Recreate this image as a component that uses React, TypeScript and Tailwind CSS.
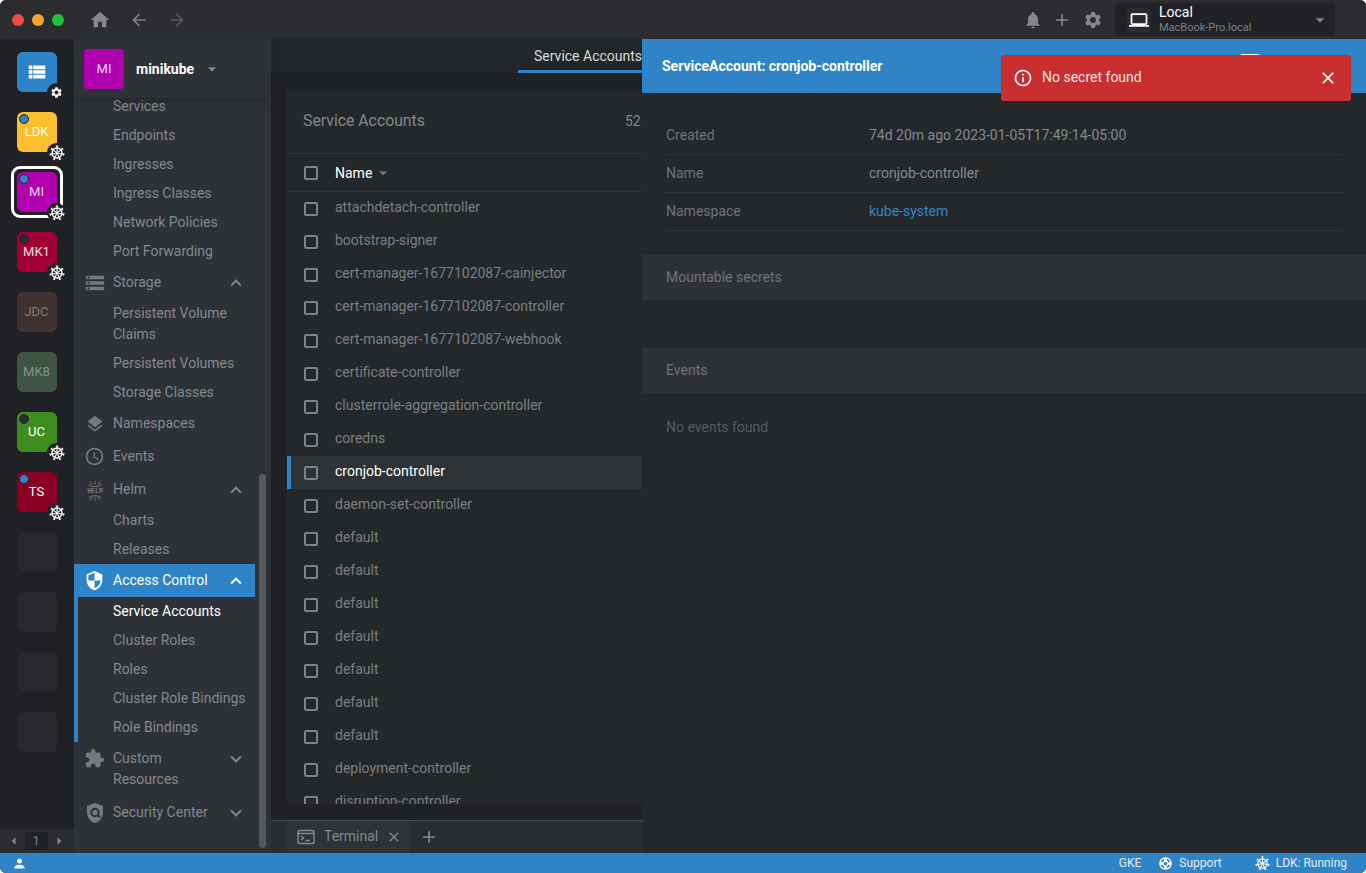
import {
  MdAdd,
  MdArrowBack,
  MdArrowDropDown,
  MdArrowForward,
  MdArrowLeft,
  MdArrowRight,
  MdClose,
  MdExpandLess,
  MdExpandMore,
  MdExtension,
  MdHome,
  MdInfoOutline,
  MdLaptop,
  MdLayers,
  MdNotifications,
  MdPerson,
  MdSchedule,
  MdSecurity,
  MdSettings,
  MdStorage,
  MdSupport,
  MdViewList,
} from "react-icons/md";
import type { ReactNode } from "react";

const HOTBAR = [
  { label: "LDK", bg: "bg-[#fcbf2d]", text: "text-white", dot: "bg-[#2e84c6]" },
  { label: "MI", bg: "bg-[#b000b0]", text: "text-[#f3d3f3]", dot: "bg-[#2e84c6]", active: true },
  { label: "MK1", bg: "bg-[#a00035]", text: "text-[#f6dbe3]", dot: "bg-[#2a2c30]" },
  { label: "JDC", bg: "bg-[#3f3230]", text: "text-[#827c79]", dim: true },
  { label: "MK8", bg: "bg-[#3e5546]", text: "text-[#83938a]", dim: true },
  { label: "UC", bg: "bg-[#3f8c1f]", text: "text-white", dot: "bg-[#2a2c30]" },
  { label: "TS", bg: "bg-[#8a0025]", text: "text-white", dot: "bg-[#2e84c6]" },
];

const ACCOUNTS = [
  "attachdetach-controller",
  "bootstrap-signer",
  "cert-manager-1677102087-cainjector",
  "cert-manager-1677102087-controller",
  "cert-manager-1677102087-webhook",
  "certificate-controller",
  "clusterrole-aggregation-controller",
  "coredns",
  "cronjob-controller",
  "daemon-set-controller",
  "default",
  "default",
  "default",
  "default",
  "default",
  "default",
  "default",
  "deployment-controller",
  "disruption-controller",
];

function KubeIcon({ size = 16 }: { size?: number }) {
  const spokes = [0, 1, 2, 3, 4, 5, 6].map((i) => (i * 360) / 7);
  return (
    <svg width={size} height={size} viewBox="0 0 24 24" fill="none" stroke="white" strokeWidth="2">
      <circle cx="12" cy="12" r="7.5" />
      <circle cx="12" cy="12" r="2.2" fill="white" stroke="none" />
      {spokes.map((a) => (
        <g key={a} transform={`rotate(${a} 12 12)`}>
          <path d="M12 10V1.2" strokeWidth="1.7" />
          <path d="M10.2 1.6h3.6" strokeWidth="1.6" />
        </g>
      ))}
    </svg>
  );
}

function HelmIcon() {
  return (
    <svg width="20" height="24" viewBox="0 0 20 24" fill="none" stroke="#77797d" strokeWidth="1">
      <path d="M3.5 6.5c3.5 3 9.500 3 13 0M10 3v3.500M5.500 3.500l1.500 3M14.500 3.500l-1.500 3" />
      <text x="10" y="15" textAnchor="middle" fill="#77797d" stroke="none" fontSize="6.500" fontWeight="700" fontFamily="'Liberation Mono', monospace">
        HELM
      </text>
      <path d="M3.500 20c3.500-3 9.500-3 13 0M10 23v-4M5.500 22.500l1.500-3M14.500 22.500l-1.500-3" />
    </svg>
  );
}

function ShieldSearchIcon() {
  return (
    <svg width="20" height="22" viewBox="0 0 20 22" fill="#77797d">
      <path d="M10 1 2 4v6.500C2 15.500 5.400 20 10 21c4.600-1 8-5.500 8-10.500V4z" />
      <circle cx="10" cy="10.500" r="3.700" fill="none" stroke="#2e3136" strokeWidth="2" />
      <path d="m12.500 13 2.500 2.500" stroke="#2e3136" strokeWidth="2" />
    </svg>
  );
}

function TerminalIcon() {
  return (
    <svg width="18" height="16" viewBox="0 0 18 16" fill="none" stroke="#85888c" strokeWidth="1.500">
      <rect x="1" y="1.500" width="16" height="13" rx="1.500" />
      <path d="M1 4.500h16" strokeWidth="1.500" />
      <path d="m4 7 2.500 2L4 11M8.500 11.500h4.500" />
    </svg>
  );
}

function HotbarTile({
  bg,
  label,
  text,
  dot,
  badge,
  active,
}: {
  bg: string;
  label?: ReactNode;
  text?: string;
  dot?: string;
  badge?: ReactNode;
  active?: boolean;
}) {
  return (
    <div className="relative h-10 w-10 shrink-0">
      {active && <div className="absolute -inset-[6px] rounded-[9px] border-[3px] border-white" />}
      <div className={`flex h-10 w-10 items-center justify-center rounded-[6px] pr-[1px] text-[13px] ${bg} ${text ?? ""}`}>
        {label}
      </div>
      {dot && (
        <div className={`absolute left-[2px] top-[2px] h-[10px] w-[10px] rounded-full border border-[#24262a] ${dot}`} />
      )}
      {badge && (
        <div className="absolute -bottom-[10px] -right-[9px] flex h-[19px] w-[19px] items-center justify-center rounded-full bg-[#1f2124]">
          {badge}
        </div>
      )}
    </div>
  );
}

function NavItem({
  icon,
  label,
  open,
  active,
  tall,
}: {
  icon: ReactNode;
  label: string;
  open?: boolean;
  active?: boolean;
  tall?: boolean;
}) {
  return (
    <div
      className={`flex items-center ${tall ? "h-[54px]" : "h-[33px]"} ${active ? "bg-[#2e84c6] text-white" : "text-[#85888c]"}`}
    >
      <div className={`flex w-[39px] shrink-0 justify-center pl-[2px] ${tall ? "-mt-[21px]" : ""}`}>{icon}</div>
      <div className="max-w-[105px] flex-1 text-sm leading-[21px]">{label}</div>
      {open !== undefined && (
        <div className={`ml-auto mr-[8px] ${tall ? "-mt-[21px]" : ""}`}>
          {open ? (
            <MdExpandLess className={active ? "text-white" : "text-[#85888c]"} size={22} />
          ) : (
            <MdExpandMore className="text-[#85888c]" size={22} />
          )}
        </div>
      )}
    </div>
  );
}

function SubItem({ label, active }: { label: string; active?: boolean }) {
  return (
    <div className={`py-1 pl-[39px] pr-1 text-sm leading-[21px] ${active ? "text-white" : "text-[#85888c]"}`}>
      {label}
    </div>
  );
}

function Checkbox() {
  return <div className="h-[14px] w-[14px] shrink-0 rounded-[2px] border-2 border-[#7f8285]" />;
}

function DetailRow({ label, value, link }: { label: string; value: string; link?: boolean }) {
  return (
    <div className="flex h-[38px] items-center border-b border-[#2f3337] pb-[2px] text-sm">
      <div className="w-[203px] text-[#707377]">{label}</div>
      <div className={link ? "text-[#2e84c6]" : "text-[#85888c]"}>{value}</div>
    </div>
  );
}

export default function App() {
  return (
    <div className="relative flex h-[873px] w-[1366px] flex-col overflow-hidden rounded-[6px] bg-[#1f2124] font-['Roboto',sans-serif]">
      {/* Title bar */}
      <div className="flex h-[39px] shrink-0 items-center bg-[#2a2c30] pl-3">
        <div className="flex gap-2">
          <div className="h-3 w-3 rounded-full bg-[#ee4a47]" />
          <div className="h-3 w-3 rounded-full bg-[#f5a62f]" />
          <div className="h-3 w-3 rounded-full bg-[#22c03c]" />
        </div>
        <MdHome className="ml-[25px] text-[#85878a]" size={22} />
        <MdArrowBack className="ml-[18px] text-[#7d7f83]" size={20} />
        <MdArrowForward className="ml-[18px] text-[#55585c]" size={20} />
        <MdNotifications className="ml-[836px] text-[#85878a]" size={20} />
        <MdAdd className="ml-[9px] text-[#85878a]" size={20} />
        <MdSettings className="ml-[11px] text-[#85878a]" size={20} />
        <div className="ml-3 flex h-[33px] w-[220px] shrink-0 items-center rounded-[4px] bg-[#1f2124] pl-3">
          <div className="flex h-6 w-6 items-center justify-center rounded-[4px] bg-[#2a2c30]">
            <MdLaptop className="text-white" size={20} />
          </div>
          <div className="ml-2">
            <div className="text-sm leading-[17px] text-white">Local</div>
            <div className="text-[11px] leading-[14px] text-[#7b828a]">MacBook-Pro.local</div>
          </div>
          <MdArrowDropDown className="ml-auto mr-[5px] text-[#85878a]" size={20} />
        </div>
      </div>

      <div className="flex min-h-0 flex-1">
        {/* Hotbar */}
        <div className="flex w-[74px] shrink-0 flex-col">
          <div className="flex flex-1 flex-col items-center gap-5 pt-[13px]">
            <HotbarTile
              bg="bg-[#2e84c6]"
              label={<MdViewList className="text-white" size={22} />}
              badge={<MdSettings className="text-white" size={13} />}
            />
            {HOTBAR.map((h) => (
              <HotbarTile
                key={h.label}
                bg={h.bg}
                text={h.text}
                label={h.label}
                dot={h.dot}
                active={h.active}
                badge={h.dim ? undefined : <KubeIcon />}
              />
            ))}
            <HotbarTile bg="bg-[#26282c]" />
            <HotbarTile bg="bg-[#26282c]" />
            <HotbarTile bg="bg-[#26282c]" />
            <HotbarTile bg="bg-[#26282c]" />
          </div>
          <div className="flex h-6 items-center justify-center bg-[#2a2c30] pr-[2px]">
            <MdArrowLeft className="text-[#85888c]" size={18} />
            <div className="mx-[2px] flex h-[18px] w-[23px] items-center justify-center rounded-[3px] bg-[#1f2124] text-xs text-[#85888c]">
              1
            </div>
            <MdArrowRight className="text-[#85888c]" size={18} />
          </div>
        </div>

        {/* Sidebar */}
        <div className="relative flex w-[197px] shrink-0 flex-col bg-[#2e3136]">
          <div className="relative z-10 flex h-[59px] shrink-0 items-start bg-[#2e3136] pl-[10px] pt-[10px] shadow-[0_4px_8px_-4px_rgba(0,0,0,0.35)]">
            <div className="flex h-10 w-10 items-center justify-center rounded-[4px] bg-[#b000b0] text-[13px] text-[#f3d3f3]">
              MI
            </div>
            <div className="ml-3 flex h-10 items-center text-sm font-bold text-white">minikube</div>
            <MdArrowDropDown className="ml-2 mt-[10px] text-[#85888c]" size={20} />
          </div>
          <div className="-mt-[6px] w-[181px]">
            <SubItem label="Services" />
            <SubItem label="Endpoints" />
            <SubItem label="Ingresses" />
            <SubItem label="Ingress Classes" />
            <SubItem label="Network Policies" />
            <SubItem label="Port Forwarding" />
            <NavItem icon={<MdStorage className="text-[#77797d]" size={22} />} label="Storage" open />
            <SubItem label="Persistent Volume Claims" />
            <SubItem label="Persistent Volumes" />
            <SubItem label="Storage Classes" />
            <NavItem icon={<MdLayers className="text-[#77797d]" size={20} />} label="Namespaces" />
            <NavItem icon={<MdSchedule className="text-[#77797d]" size={21} />} label="Events" />
            <NavItem icon={<HelmIcon />} label="Helm" open />
            <SubItem label="Charts" />
            <SubItem label="Releases" />
            <NavItem icon={<MdSecurity className="text-white" size={21} />} label="Access Control" open active />
            <div className="border-l-4 border-[#2e84c6]">
              <div className="-ml-1">
                <SubItem label="Service Accounts" active />
                <SubItem label="Cluster Roles" />
                <SubItem label="Roles" />
                <SubItem label="Cluster Role Bindings" />
                <SubItem label="Role Bindings" />
              </div>
            </div>
            <NavItem icon={<MdExtension className="text-[#77797d]" size={21} />} label="Custom Resources" open={false} tall />
            <NavItem icon={<ShieldSearchIcon />} label="Security Center" open={false} />
          </div>
          <div className="absolute bottom-[5px] right-[5px] h-[374px] w-[7px] rounded-full bg-[#55585d]" />
        </div>

        {/* Main content */}
        <div className="flex min-w-0 flex-1 flex-col">
          <div className="flex h-[34px] shrink-0 justify-start bg-[#232629] pl-[247px]">
            <div className="h-[34px] w-[200px] shrink-0 border-b-[3px] border-[#2e84c6] pl-4 text-sm leading-[34px] text-[#d8dadc]">
              Service Accounts
            </div>
          </div>
          <div className="flex min-h-0 flex-1 flex-col px-4 pt-4">
            <div className="min-h-0 flex-1 overflow-hidden bg-[#24282b]">
              <div className="flex h-[65px] items-center border-b border-[#2f3337] pl-4 text-[#85888c]">
                <div className="text-[15.8px]">Service Accounts</div>
                <div className="ml-[200px] text-sm">52</div>
              </div>
              <div className="flex h-[38px] items-center border-b border-[#2f3337] pl-[17px] text-sm text-white">
                <Checkbox />
                <div className="ml-[17px]">Name</div>
                <MdArrowDropDown className="ml-[1px] text-[#6f7276]" size={20} />
              </div>
              {ACCOUNTS.map((name, i) => {
                const selected = name === "cronjob-controller";
                return (
                  <div
                    key={`${name}-${i}`}
                    className={`flex h-[33px] items-center pl-[17px] text-sm ${selected ? "border-l-4 border-[#2e84c6] !pl-[13px] bg-[#2f3337] text-white" : "text-[#7b7e82]"}`}
                  >
                    <Checkbox />
                    <div className="-mt-[3px] ml-[17px]">{name}</div>
                  </div>
                );
              })}
            </div>
          </div>
          <div className="mt-4 flex h-[33px] shrink-0 border-t border-[#46494d] bg-[#2a2d30] pl-4">
            <div className="flex w-[123px] items-center bg-[#2f3237] pl-[10px] text-sm text-[#85888c]">
              <TerminalIcon />
              <div className="-mt-[2px] ml-[9px]">Terminal</div>
              <MdClose className="ml-2" size={16} />
            </div>
            <div className="flex items-center pl-[9px]">
              <MdAdd className="text-[#85888c]" size={20} />
            </div>
          </div>
        </div>
      </div>

      {/* Status bar */}
      <div className="flex h-5 shrink-0 items-center bg-[#2e84c6] pl-3 text-xs text-[#e3eef7]">
        <MdPerson className="text-white" size={15} />
        <div className="ml-auto">GKE</div>
        <MdSupport className="ml-[17px] text-white" size={15} />
        <div className="ml-[6px]">Support</div>
        <div className="ml-[33px]">
          <KubeIcon size={15} />
        </div>
        <div className="ml-[6px] mr-[19px]">LDK: Running</div>
      </div>

      {/* Details drawer */}
      <div className="absolute bottom-5 left-[642px] right-0 top-[39px] bg-[#24282b]">
        <div className="relative flex h-[54px] items-center bg-[#2e84c6] pl-5 text-sm font-bold text-white">
          ServiceAccount: cronjob-controller
          <div className="absolute left-[598px] top-[15px] h-5 w-5 rounded-[2px] bg-white" />
        </div>
        <div className="px-6 pt-6">
          <DetailRow label="Created" value="74d 20m ago 2023-01-05T17:49:14-05:00" />
          <DetailRow label="Name" value="cronjob-controller" />
          <DetailRow label="Namespace" value="kube-system" link />
        </div>
        <div className="mt-6 flex h-[45px] items-center bg-[#2e3236] pb-[1px] pl-6 text-sm text-[#707377]">Mountable secrets</div>
        <div className="mt-12 flex h-[45px] items-center bg-[#2e3236] pb-[1px] pl-6 text-sm text-[#707377]">Events</div>
        <div className="mt-6 pl-6 text-sm text-[#565a5e]">No events found</div>
      </div>

      {/* Notification */}
      <div className="absolute left-[1001px] top-[55px] flex h-[46px] w-[350px] items-center rounded-[3px] bg-[#c92e30] pl-[12px] pr-[13px] text-sm text-[#f8e3e3]">
        <MdInfoOutline className="text-white" size={20} />
        <div className="-mt-[2px] ml-[9px]">No secret found</div>
        <MdClose className="ml-auto text-white" size={20} />
      </div>
    </div>
  );
}
